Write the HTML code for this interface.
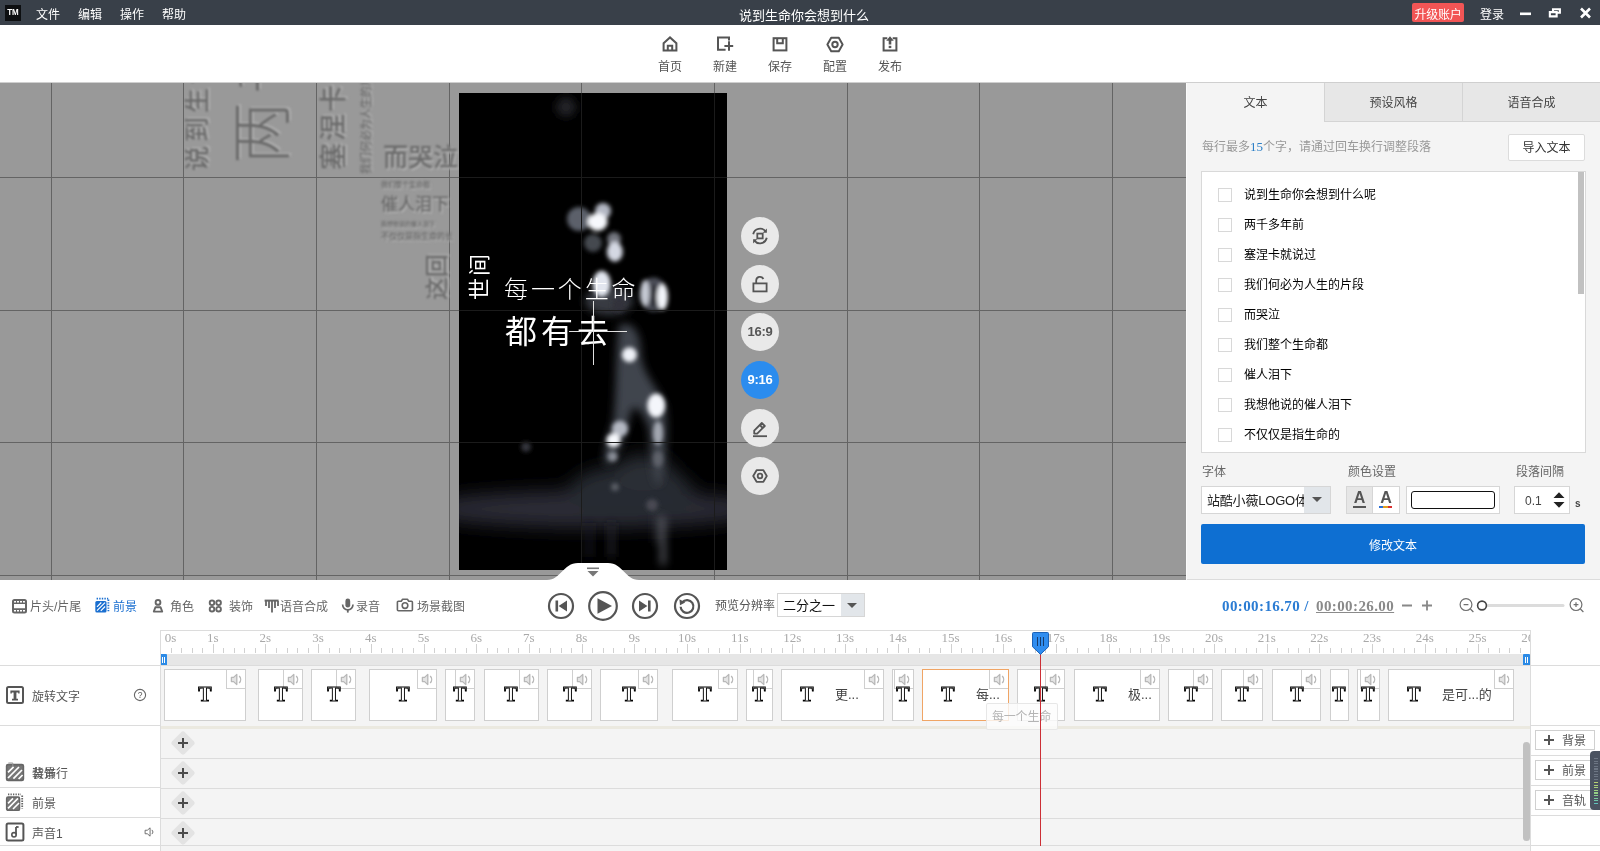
<!DOCTYPE html>
<html lang="zh-CN">
<head>
<meta charset="utf-8">
<title>说到生命你会想到什么</title>
<style>
*{box-sizing:border-box;margin:0;padding:0}
html,body{width:1600px;height:851px;overflow:hidden;background:#fff}
body{will-change:transform;font-family:"Liberation Sans","Noto Sans CJK SC",sans-serif;font-size:12px;color:#333;position:relative}
.abs{position:absolute}
/* ---------- title bar ---------- */
#titlebar{position:absolute;left:0;top:0;width:1600px;height:25px;background:#394049;color:#fff}
#titlebar .logo{position:absolute;left:5px;top:5px;width:16px;height:16px;background:#0d0f11;color:#fff;font-size:8px;font-weight:bold;line-height:16px;text-align:center}
#titlebar .logo b{display:block;transform:scaleY(1.2);transform-origin:50% 55%}
#titlebar .menu{position:absolute;top:0;height:25px;line-height:31px;font-size:12px;color:#fff;white-space:nowrap}
#titlebar .title{position:absolute;left:704px;width:200px;top:0;text-align:center;line-height:31px;font-size:13px;white-space:nowrap}
#titlebar .upg{position:absolute;left:1412px;top:3px;width:52px;height:19px;background:#f25555;border-radius:2px;color:#fff;font-size:12px;line-height:24px;text-align:center;white-space:nowrap;letter-spacing:-.3px}
#titlebar .login{position:absolute;left:1480px;top:0;line-height:31px;font-size:12px}
/* ---------- toolbar ---------- */
#toolbar{position:absolute;left:0;top:25px;width:1600px;height:58px;background:#fff;border-bottom:1px solid #cfcfcf}
.tbtn{position:absolute;top:0;width:56px;height:57px;color:#555;font-size:12px}
.tbtn svg{position:absolute;left:19px;top:9.5px;width:18px;height:18px;overflow:visible}
.tbtn span{position:absolute;left:0;width:56px;top:34px;line-height:17px;text-align:center;white-space:nowrap}
/* ---------- canvas ---------- */
#canvas{position:absolute;left:0;top:83px;width:1186px;height:497px;background:#999;overflow:hidden}
#canvas .vl{position:absolute;top:0;width:1px;height:497px;background:#646464}
#canvas .hl{position:absolute;left:0;height:1px;width:1187px;background:#646464}
#video{position:absolute;left:459px;top:10px;width:268px;height:477px;background:#000;overflow:hidden}
#video .vl,#video .hl{background:#1b1b1b}
.ghost{position:absolute;white-space:nowrap;color:#6a6a6a;line-height:1;font-weight:500;text-shadow:1.5px 1.5px 1px #b0b0b0;filter:blur(.8px)}
.vtxt{position:absolute;white-space:nowrap;color:#fff;line-height:1;font-family:"Liberation Sans","Noto Sans CJK SC",sans-serif;font-weight:200}
.cbtn{position:absolute;left:741px;width:38px;height:38px;border-radius:19px;background:#e9e9e9;color:#555;font-weight:bold;font-size:13px;line-height:38px;text-align:center;letter-spacing:-.3px}
.cbtn svg{position:absolute;left:9px;top:9px;width:20px;height:20px;overflow:visible}
.cbtn.on{background:#2b8cee;color:#fff}
#notch{position:absolute;left:533px;top:476px;width:120px;height:21px}
</style>
</head>
<body>
<div id="titlebar">
  <div class="logo"><b>TM</b></div>
  <div class="menu" style="left:36px">文件</div>
  <div class="menu" style="left:78px">编辑</div>
  <div class="menu" style="left:120px">操作</div>
  <div class="menu" style="left:162px">帮助</div>
  <div class="title">说到生命你会想到什么</div>
  <div class="upg">升级账户</div>
  <div class="login">登录</div>
  <svg class="abs" style="left:1515px;top:4px" width="80" height="18" viewBox="0 0 80 18">
    <rect x="5" y="8.5" width="11" height="2.6" fill="#fff"/>
    <path d="M38 8V5.2h6.9v3.5h-2.6 M34.85 8.1h6.8v4.3h-6.8z" fill="none" stroke="#fff" stroke-width="2.1"/>
    <path d="M66 4.5l9 9M75 4.5l-9 9" stroke="#fff" stroke-width="2.6" fill="none"/>
  </svg>
</div>
<div id="toolbar">
  <div class="tbtn" style="left:642px">
    <svg viewBox="0 0 18 18"><path d="M2.6 8.2L9 2.4l6.4 5.8v7.4H2.6z" fill="none" stroke="#555" stroke-width="2" stroke-linejoin="miter"/><path d="M6.8 15.4v-4.6h4.4v4.6" fill="none" stroke="#555" stroke-width="2"/></svg>
    <span>首页</span></div>
  <div class="tbtn" style="left:697px">
    <svg viewBox="0 0 18 18"><path d="M13 5.4V2.4H2v12.3h7.6" fill="none" stroke="#555" stroke-width="2"/><path d="M13 6.2v9.6M8.4 10.9h8.8" stroke="#555" stroke-width="2" fill="none"/></svg>
    <span>新建</span></div>
  <div class="tbtn" style="left:752px">
    <svg viewBox="0 0 18 18"><rect x="2.6" y="3.2" width="12.8" height="12.2" fill="none" stroke="#555" stroke-width="2"/><path d="M6.2 3.2v5h5.6v-5" fill="none" stroke="#555" stroke-width="2"/></svg>
    <span>保存</span></div>
  <div class="tbtn" style="left:807px">
    <svg viewBox="0 0 18 18"><path d="M5.2 2.8h7.6l3.8 6.7-3.8 6.7H5.2L1.4 9.5z" fill="none" stroke="#555" stroke-width="2" stroke-linejoin="round"/><circle cx="9" cy="9.5" r="2.7" fill="none" stroke="#555" stroke-width="2"/></svg>
    <span>配置</span></div>
  <div class="tbtn" style="left:862px">
    <svg viewBox="0 0 18 18"><path d="M6.3 3.2H2.6v12.2h12.8V3.2h-3.7" fill="none" stroke="#555" stroke-width="2"/><path d="M9 1.2l3.8 4.6h-2.5v3.8H7.7V5.8H5.2z" fill="#555"/><rect x="7.7" y="10.8" width="2.6" height="2.3" fill="#555"/></svg>
    <span>发布</span></div>
</div>
<div id="canvas">
  <!-- grid -->
  <div class="vl" style="left:51px"></div><div class="vl" style="left:183px"></div><div class="vl" style="left:316px"></div><div class="vl" style="left:449px"></div><div class="vl" style="left:581px"></div><div class="vl" style="left:714px"></div><div class="vl" style="left:847px"></div><div class="vl" style="left:979px"></div><div class="vl" style="left:1112px"></div>
  <div class="hl" style="top:94px"></div><div class="hl" style="top:227px"></div><div class="hl" style="top:359px"></div><div class="hl" style="top:492px"></div>
  <!-- ghost texts -->
  <div class="ghost" style="left:185px;top:88px;font-size:25px;letter-spacing:4px;transform-origin:0 0;transform:rotate(-90deg)">说到生命你会</div>
  <div class="ghost" style="left:232px;top:81px;font-size:62px;letter-spacing:8px;font-weight:300;transform-origin:0 0;transform:rotate(-90deg)">两千</div>
  <div class="ghost" style="left:321px;top:87px;font-size:27px;letter-spacing:2px;transform-origin:0 0;transform:rotate(-90deg)">塞涅卡就</div>
  <div class="ghost" style="left:361px;top:91px;font-size:11px;transform-origin:0 0;transform:rotate(-90deg)">我们何必为人生的片段</div>
  <div class="ghost" style="left:383px;top:62px;font-size:25px">而哭泣</div>
  <div class="ghost" style="left:381px;top:98px;font-size:7px">我们整个生命都</div>
  <div class="ghost" style="left:381px;top:113px;font-size:17px">催人泪下</div>
  <div class="ghost" style="left:381px;top:138px;font-size:6px">我想他说的催人泪下</div>
  <div class="ghost" style="left:381px;top:150px;font-size:8px">不仅仅是指生命的长</div>
  <div class="ghost" style="left:426px;top:217px;font-size:23px;transform-origin:0 0;transform:rotate(-90deg)">这回</div>
  <!-- video -->
  <div id="video">
    <svg class="abs" style="left:0;top:0" width="268" height="477" viewBox="0 0 268 477">
      <defs>
        <filter id="b2" x="-50%" y="-50%" width="200%" height="200%"><feGaussianBlur stdDeviation="2"/></filter>
        <filter id="b4" x="-50%" y="-50%" width="200%" height="200%"><feGaussianBlur stdDeviation="4"/></filter>
        <filter id="b8" x="-50%" y="-50%" width="200%" height="200%"><feGaussianBlur stdDeviation="9"/></filter>
      </defs>
      <rect width="268" height="477" fill="#000"/>
      <!-- bottom splash band -->
      <g filter="url(#b8)">
        <ellipse cx="134" cy="416" rx="175" ry="19" fill="#2a2c34"/>
        <ellipse cx="172" cy="398" rx="62" ry="26" fill="#272930"/>
        <ellipse cx="185" cy="380" rx="30" ry="18" fill="#2c2e36"/>
      </g>
      <g filter="url(#b4)">
        <rect x="202" y="424" width="4" height="48" fill="#6f727b"/>
        <rect x="196" y="420" width="3" height="30" fill="#3c3e46"/>
        <rect x="128" y="430" width="4" height="34" fill="#22242a"/>
        <rect x="150" y="430" width="5" height="34" fill="#25272d"/>
        <!-- falling column : inverted Y -->
        <path d="M160 232 C172 228 182 236 182 262 C184 282 200 296 206 312 C210 340 206 380 200 392 C194 392 192 360 190 336 C184 318 176 310 172 318 C168 340 160 360 150 372 C142 372 146 350 154 330 C158 300 156 262 160 232z" fill="#41444d"/>
        <ellipse cx="150" cy="208" rx="24" ry="14" fill="#383a42"/>
      </g>
      <!-- faint -->
      <circle cx="107" cy="14" r="10" fill="#202226" filter="url(#b4)"/>
      <circle cx="67" cy="354" r="5" fill="#34363c" filter="url(#b2)"/>
      <circle cx="156" cy="394" r="4" fill="#5a5d65" filter="url(#b2)"/>
      <circle cx="193" cy="412" r="6" fill="#484a52" filter="url(#b2)"/>
      <!-- droplets -->
      <g filter="url(#b2)">
        <circle cx="120" cy="126" r="12" fill="#5c606b"/>
        <circle cx="134" cy="150" r="9" fill="#45484f"/>
        <circle cx="155" cy="146" r="7" fill="#73767f"/>
        <circle cx="144" cy="118" r="8" fill="#b3b7c3"/>
        <ellipse cx="138.6" cy="129" rx="10" ry="9" fill="#f6f8fc"/>
        <ellipse cx="155.8" cy="158.7" rx="8" ry="10" fill="#d4d8e3"/>
        <ellipse cx="142.7" cy="190.7" rx="9" ry="13" fill="#e2e6ef"/>
        <circle cx="160" cy="212" r="7" fill="#30323a"/>
        <!-- big droplet with two lobes -->
        <ellipse cx="194.5" cy="201.4" rx="14" ry="17" fill="#4b4e58"/>
        <ellipse cx="186" cy="200" rx="4.5" ry="13" fill="#c6cad4"/>
        <ellipse cx="203.5" cy="204" rx="5.5" ry="13" fill="#f3f5fa"/>
        <ellipse cx="195" cy="203" rx="2.5" ry="12" fill="#15161a"/>
        <circle cx="170.4" cy="261.7" r="7.5" fill="#eef1f7"/>
        <ellipse cx="197.2" cy="312.6" rx="9" ry="12" fill="#f4f6fb"/>
        <ellipse cx="199" cy="340" rx="5" ry="12" fill="#a3a7b1"/>
        <circle cx="161" cy="335.7" r="8" fill="#b4b8c2"/>
        <circle cx="154.5" cy="347.2" r="7" fill="#f6f8fc"/>
        <circle cx="153.6" cy="363.6" r="5" fill="#898d96"/>
        <ellipse cx="199" cy="366" rx="5" ry="8" fill="#5f626b"/>
      </g>
    </svg>
    <div class="vl" style="left:122px"></div><div class="vl" style="left:255px"></div>
    <div class="hl" style="top:84px"></div><div class="hl" style="top:217px"></div><div class="hl" style="top:349px"></div>
    <!-- rotated text -->
    <div class="vtxt" style="left:10px;top:207px;font-size:22px;letter-spacing:2px;font-weight:400;transform-origin:0 0;transform:rotate(-90deg)">世间</div>
    <div class="vtxt" style="left:45px;top:185px;font-size:24px;letter-spacing:2.9px">每一个生命</div>
    <div class="vtxt" style="left:46px;top:223px;font-size:32px;letter-spacing:4px;font-weight:400">都有去</div>
    <div class="abs" style="left:110px;top:238px;width:58px;height:1px;background:#e0e0e0"></div>
    <div class="abs" style="left:134px;top:208px;width:1px;height:64px;background:#e0e0e0"></div>
  </div>
  <!-- round buttons -->
  <div class="cbtn" style="top:134px"><svg viewBox="0 0 20 20"><path d="M3.2 8.2A7 7 0 0 1 15.6 5.4" fill="none" stroke="#555" stroke-width="1.8"/><path d="M16.8 11.8A7 7 0 0 1 4.4 14.6" fill="none" stroke="#555" stroke-width="1.8"/><path d="M16.9 2.6v4.2h-4.2z" fill="#555"/><path d="M3.1 17.4v-4.2h4.2z" fill="#555"/><rect x="7.3" y="7.6" width="5.4" height="4.8" fill="none" stroke="#555" stroke-width="1.8"/></svg></div>
  <div class="cbtn" style="top:182px"><svg viewBox="0 0 20 20"><rect x="3.4" y="9.4" width="13.2" height="8" fill="none" stroke="#555" stroke-width="1.8"/><path d="M6.2 9.2V6.6a3.8 3.8 0 0 1 7.2-1.6" fill="none" stroke="#555" stroke-width="1.8"/></svg></div>
  <div class="cbtn" style="top:230px">16:9</div>
  <div class="cbtn on" style="top:278px">9:16</div>
  <div class="cbtn" style="top:326px"><svg viewBox="0 0 20 20"><path d="M4.2 12.6l7.6-7.6 3 3-7.6 7.6H4.2z" fill="none" stroke="#555" stroke-width="1.8" stroke-linejoin="round"/><path d="M9.8 7l3 3" stroke="#555" stroke-width="1.8"/><path d="M3 18.2h14" stroke="#555" stroke-width="1.8"/></svg></div>
  <div class="cbtn" style="top:374px"><svg viewBox="0 0 20 20"><path d="M6.6 4.2h6.8l3.4 5.8-3.4 5.8H6.6L3.2 10z" fill="none" stroke="#555" stroke-width="1.8" stroke-linejoin="round"/><circle cx="10" cy="10" r="2.3" fill="none" stroke="#555" stroke-width="1.8"/></svg></div>
  <!-- notch -->
  <svg id="notch" viewBox="0 0 120 21"><path d="M14 21 C28 21 30 4 45 4 L75 4 C90 4 92 21 106 21z" fill="#fff"/><rect x="54" y="8.5" width="12" height="1.6" fill="#777"/><path d="M54.5 12h11l-5.5 5.5z" fill="#777"/></svg>
</div>
<style>
/* ---------- right panel ---------- */
#panel{position:absolute;left:1187px;top:83px;width:413px;height:497px;background:#f4f4f4;border-bottom:1px solid #dcdcdc;box-shadow:-1px 0 0 #fbfbfb}
#panel .tab{position:absolute;top:0;height:39px;line-height:40px;text-align:center;font-size:12px;color:#444;background:#e7e7e7;border-bottom:1px solid #d4d4d4;border-left:1px solid #d4d4d4}
#panel .tab.on{background:#f4f4f4;border-bottom:none;border-left:none}
#panel .hint{position:absolute;left:15px;top:55px;line-height:18px;font-size:12px;color:#999;white-space:nowrap}
#panel .hint b{font-weight:normal;color:#2b7fc7;font-family:"Liberation Serif",serif;font-size:13px}
#panel .imp{position:absolute;left:321px;top:51px;width:77px;height:27px;background:#fff;border:1px solid #dcdcdc;border-radius:2px;text-align:center;line-height:26px;font-size:12px;color:#333}
#list{position:absolute;left:14px;top:88px;width:385px;height:282px;background:#fff;border:1px solid #d9d9d9;overflow:hidden}
#list .it{position:absolute;left:0;width:370px;height:30px}
#list .it i{position:absolute;left:16px;top:8px;width:14px;height:14px;border:1px solid #d8d8d8;background:#fff}
#list .it span{position:absolute;left:42px;top:0;line-height:31px;font-size:12px;color:#000;white-space:nowrap}
#list .sb{position:absolute;left:376px;top:0;width:6px;height:122px;background:#c1c1c1}
#panel .lbl{position:absolute;top:380px;line-height:18px;font-size:12px;color:#666;white-space:nowrap}
#panel .combo{position:absolute;left:14px;top:403px;width:130px;height:28px;background:#fff;border:1px solid #d6d6d6;overflow:hidden}
#panel .combo span{position:absolute;left:5px;top:0;line-height:28px;font-size:13px;color:#222;white-space:nowrap;letter-spacing:-.2px}
#panel .combo em{position:absolute;right:0;top:0;width:26px;height:26px;background:#e2e6ea}
#panel .combo em:after{content:"";position:absolute;left:8px;top:10px;border:5px solid transparent;border-top:5px solid #555;border-bottom:none}
#panel .abtn{position:absolute;top:403px;width:27px;height:28px;border:1px solid #d6d6d6;background:#fff;text-align:center;font-weight:bold;font-size:16px;line-height:22px;color:#555}
#panel .abtn u{position:absolute;left:6px;top:19px;width:13px;height:2px;background:#555}
#panel .colorbox{position:absolute;left:219px;top:403px;width:94px;height:28px;background:#fff;border:1px solid #d6d6d6}
#panel .colorbox i{position:absolute;left:4px;top:4px;width:84px;height:18px;border:1.5px solid #111;border-radius:3px;background:#fff}
#panel .spin{position:absolute;left:327px;top:403px;width:56px;height:28px;background:#fff;border:1px solid #d6d6d6}
#panel .spin span{position:absolute;left:10px;top:0;line-height:28px;font-size:12px;color:#444}
#panel .go{position:absolute;left:14px;top:441px;width:384px;height:40px;background:#0e6fd2;border-radius:2px;color:#fff;text-align:center;line-height:45px;font-size:12px}
</style>
<div id="panel">
  <div class="tab on" style="left:0;width:137px">文本</div>
  <div class="tab" style="left:137px;width:138px">预设风格</div>
  <div class="tab" style="left:275px;width:138px">语音合成</div>
  <div class="hint">每行最多<b>15</b>个字，请通过回车换行调整段落</div>
  <div class="imp">导入文本</div>
  <div id="list">
    <div class="it" style="top:8px"><i></i><span>说到生命你会想到什么呢</span></div>
    <div class="it" style="top:38px"><i></i><span>两千多年前</span></div>
    <div class="it" style="top:68px"><i></i><span>塞涅卡就说过</span></div>
    <div class="it" style="top:98px"><i></i><span>我们何必为人生的片段</span></div>
    <div class="it" style="top:128px"><i></i><span>而哭泣</span></div>
    <div class="it" style="top:158px"><i></i><span>我们整个生命都</span></div>
    <div class="it" style="top:188px"><i></i><span>催人泪下</span></div>
    <div class="it" style="top:218px"><i></i><span>我想他说的催人泪下</span></div>
    <div class="it" style="top:248px"><i></i><span>不仅仅是指生命的</span></div>
    <div class="sb"></div>
  </div>
  <div class="lbl" style="left:15px">字体</div>
  <div class="lbl" style="left:161px">颜色设置</div>
  <div class="lbl" style="left:329px">段落间隔</div>
  <div class="combo"><span>站酷小薇LOGO体</span><em></em></div>
  <div class="abtn" style="left:159px;background:#e6e6e6">A<u></u></div>
  <div class="abtn" style="left:186px;border-left:none;width:27px">A<u style="background:linear-gradient(90deg,#2b6fd6 0 33%,#e0a020 33% 66%,#d93030 66%)"></u></div>
  <div class="colorbox"><i></i></div>
  <div class="spin"><span>0.1</span>
    <svg class="abs" style="left:37px;top:3px" width="14" height="20" viewBox="0 0 14 20"><path d="M1.5 8L7 2.2 12.5 8z M1.5 12L7 17.8 12.5 12z" fill="#222"/></svg>
  </div>
  <div class="abs" style="left:388px;top:415px;font-size:10px;font-weight:bold;color:#444">s</div>
  <div class="go">修改文本</div>
</div>
<style>
/* ---------- bottom ---------- */
#bottom{position:absolute;left:0;top:580px;width:1600px;height:271px;background:#fff}
.btab{position:absolute;top:18px;height:18px;line-height:18px;font-size:12px;color:#666;white-space:nowrap}
.btab.on{color:#1a6fd0}
.bic{position:absolute;top:16px;width:18px;height:18px;overflow:visible}
#ruler{position:absolute;left:160px;top:50px;width:1371px;height:36px;border-top:1px solid #dcdcdc;border-left:1px solid #dcdcdc;border-right:1px solid #dcdcdc;overflow:hidden}
#ruler .lb{position:absolute;top:0px;width:40px;margin-left:-20px;text-align:center;font-family:"Liberation Serif",serif;font-size:13px;line-height:14px;color:#a9a9a9;white-space:nowrap}
#ruler .tk{position:absolute;top:17px;width:1px;height:5px;background:#d0d0d0}
#ruler .tk.M{top:13px;height:9px}
#ruler .bar{position:absolute;left:0;top:23px;width:1371px;height:12px;background:#e6e6e6}
.hd{position:absolute;top:23px;width:7px;height:12px;background:#2b8ae6;border-radius:1px}
.hd:before,.hd:after{content:"";position:absolute;top:3px;width:1px;height:6px;background:#fff}
.hd:before{left:2px}.hd:after{left:4px}
#tracks{position:absolute;left:0;top:85px;width:1600px;height:186px}
.rowl{position:absolute;left:0;width:160px;border-top:1px solid #dcdcdc}
.rlabel{position:absolute;left:32px;line-height:18px;font-size:12px;color:#555;white-space:nowrap}
.ric{position:absolute;left:5px;width:20px;height:20px;overflow:visible}
#tarea{position:absolute;left:160px;top:0;width:1371px;height:186px;background:#f4f4f4;border-left:1px solid #dcdcdc;border-right:1px solid #dcdcdc;border-top:1px solid #dcdcdc;overflow:hidden}
.clip{position:absolute;top:3px;height:52px;background:#fff;border:1px solid #cfcfcf;overflow:hidden}
.clip.sel{border-color:#f0a565}
.clip .sp{position:absolute;right:-1px;top:-1px;width:20px;height:20px;border:1px solid #cfcfcf;background:#fff}
.clip .sp svg{position:absolute;left:3px;top:3px;width:13px;height:13px}
.clip .T{position:absolute;top:16px;width:20px;height:20px;overflow:visible}
.clip .tx{position:absolute;top:16px;line-height:18px;font-size:13px;color:#444;white-space:nowrap}
.trl{position:absolute;left:0;width:1371px;height:1px;background:#dcdcdc}
.plus{position:absolute;left:13px;width:18px;height:18px;background:#e3e3e3;border-radius:3px;transform:rotate(45deg)}
.plusx{position:absolute;left:17px;width:10px;height:10px}
.plusx:before{content:"";position:absolute;left:0;top:4px;width:10px;height:2px;background:#4a4a4a}
.plusx:after{content:"";position:absolute;left:4px;top:0;width:2px;height:10px;background:#4a4a4a}
.addb{position:absolute;left:1535px;width:60px;height:20px;border:1px solid #d0d0d0;background:#fff;font-size:12px;color:#555;line-height:21px;white-space:nowrap}
.addb span{position:absolute;left:26px;top:0}
.addb:before{content:"";position:absolute;left:8px;top:8px;width:10px;height:2px;background:#555}
.addb:after{content:"";position:absolute;left:12px;top:4px;width:2px;height:10px;background:#555}
.rline{position:absolute;left:1531px;width:69px;height:1px;background:#dcdcdc}
</style>
<div id="bottom">

  <svg class="bic" style="left:11px" viewBox="0 0 18 18"><rect x="2" y="4" width="13" height="12.4" rx="1.5" fill="none" stroke="#666" stroke-width="2"/><path d="M2 7.3h13M2 13.1h13" stroke="#666" stroke-width="1.6"/><path d="M5.5 4v3M8.5 4v3M11.5 4v3M5.5 13.4v3M8.5 13.4v3M11.5 13.4v3" stroke="#666" stroke-width="1"/></svg>
  <div class="btab" style="left:30px">片头/片尾</div>
  <svg class="bic" style="left:94px" viewBox="0 0 18 18"><rect x="1.3" y="5" width="11.2" height="11.4" rx="1.5" fill="#1a6fd0"/><path d="M3 14.6l8-8M3 10.8l4.3-4.3M6.8 14.8l4.3-4.3" stroke="#fff" stroke-width="1.2"/><path d="M2.6 2.6h11.6" stroke="#1a6fd0" stroke-width="1.8" stroke-dasharray="1.4 1.2"/><path d="M14.4 3.6v11.6" stroke="#1a6fd0" stroke-width="1.8" stroke-dasharray="1.4 1.2"/></svg>
  <div class="btab on" style="left:113px">前景</div>
  <svg class="bic" style="left:149px" viewBox="0 0 18 18"><circle cx="9" cy="6.4" r="2.4" fill="none" stroke="#666" stroke-width="1.9"/><path d="M6.4 11.2h5.2l1.6 4.4H4.8z" fill="none" stroke="#666" stroke-width="1.9" stroke-linejoin="round"/></svg>
  <div class="btab" style="left:170px">角色</div>
  <svg class="bic" style="left:207px" viewBox="0 0 18 18"><g fill="none" stroke="#666" stroke-width="1.9"><circle cx="5" cy="6.8" r="2.3"/><circle cx="11.6" cy="6.8" r="2.3"/><circle cx="5" cy="13.2" r="2.3"/><circle cx="11.6" cy="13.2" r="2.3"/></g></svg>
  <div class="btab" style="left:229px">装饰</div>
  <svg class="bic" style="left:263px" viewBox="0 0 18 18"><path d="M1.6 4.6h14" stroke="#666" stroke-width="2"/><path d="M3 5v5M6 5v7M9 5v11.6M12 5v7M15 5v5" stroke="#666" stroke-width="1.8"/></svg>
  <div class="btab" style="left:280px">语音合成</div>
  <svg class="bic" style="left:339px" viewBox="0 0 18 18"><rect x="6.4" y="2.6" width="4.8" height="9" rx="2.4" fill="#666"/><path d="M3.6 8.6a5.2 5.2 0 0 0 10.4 0" fill="none" stroke="#666" stroke-width="1.7"/><path d="M8.8 13.6v3" stroke="#666" stroke-width="1.8"/></svg>
  <div class="btab" style="left:356px">录音</div>
  <svg class="bic" style="left:396px" viewBox="0 0 18 18"><path d="M2.4 5.2h2.8l1.4-2h4.8l1.4 2h2.6a1 1 0 0 1 1 1v7.6a1 1 0 0 1-1 1H2.4a1 1 0 0 1-1-1V6.2a1 1 0 0 1 1-1z" fill="none" stroke="#666" stroke-width="1.6" stroke-linejoin="round"/><circle cx="9" cy="9.6" r="2.8" fill="none" stroke="#666" stroke-width="1.6"/></svg>
  <div class="btab" style="left:417px">场景截图</div>

  <svg class="abs" style="left:540px;top:8px" width="170" height="36" viewBox="0 0 170 36">
    <g fill="none" stroke="#555" stroke-width="2.2"><circle cx="21" cy="18" r="12"/><circle cx="63" cy="18" r="13.8"/><circle cx="105" cy="18" r="12"/><circle cx="147" cy="18" r="12"/></g>
    <path d="M15.5 12.6h2.6v10.8h-2.6z M27 12.6v10.8l-8.4-5.4z" fill="#555"/>
    <path d="M57.5 10.2v15.6L72 18z" fill="#555"/>
    <path d="M108 12.6h2.6v10.8H108z M99 12.6v10.8l8.4-5.4z" fill="#555"/>
    <path d="M142.2 14.2a6.4 6.4 0 1 1-1.6 4.6" fill="none" stroke="#555" stroke-width="2.2"/>
    <path d="M139.4 11.2l.6 6 5.2-2.6z" fill="#555"/>
  </svg>
  <div class="abs" style="left:715px;top:17px;line-height:18px;font-size:12px;color:#555;white-space:nowrap">预览分辨率</div>
  <div class="abs" style="left:777px;top:13px;width:88px;height:24px;border:1px solid #d6d6d6;background:#fff"><span class="abs" style="left:5px;top:0;line-height:23px;font-size:13px;color:#111;white-space:nowrap">二分之一</span><span class="abs" style="right:0;top:0;width:23px;height:22px;background:#e2e6ea"></span><span class="abs" style="left:69px;top:9px;border:5px solid transparent;border-top:5px solid #555;border-bottom:none"></span></div>
  <div class="abs" style="left:1222px;top:16px;line-height:20px;font-family:'Liberation Serif',serif;font-weight:bold;font-size:15px;color:#2b7cd3;white-space:nowrap;letter-spacing:.4px">00:00:16.70 /</div>
  <div class="abs" style="left:1316px;top:16px;line-height:20px;font-family:'Liberation Serif',serif;font-weight:bold;font-size:15px;color:#8a8a8a;white-space:nowrap;text-decoration:underline;letter-spacing:.4px">00:00:26.00</div>
  <svg class="abs" style="left:1400px;top:16px" width="190" height="20" viewBox="0 0 190 20">
    <path d="M2 9.5h10M22 9.5h10M27 4.5v10" stroke="#888" stroke-width="1.8"/>
    <g fill="none" stroke="#6f6f6f" stroke-width="1.2"><circle cx="66" cy="8.6" r="5.9"/><path d="M63.6 8.6h4.8M70.4 13l3 3"/><circle cx="176" cy="8.6" r="5.9"/><path d="M173.6 8.6h4.8M176 6.2v4.8M180.4 13l3 3"/></g>
    <path d="M87 9.5h76" stroke="#dcdcdc" stroke-width="3" stroke-linecap="round"/>
    <circle cx="82" cy="9.5" r="4.4" fill="#fff" stroke="#444" stroke-width="1.6"/>
  </svg>

  <div id="ruler">
<div class="lb" style="left:9.5px">0s</div>
<div class="lb" style="left:51.7px">1s</div>
<div class="lb" style="left:104.4px">2s</div>
<div class="lb" style="left:157.1px">3s</div>
<div class="lb" style="left:209.8px">4s</div>
<div class="lb" style="left:262.5px">5s</div>
<div class="lb" style="left:315.2px">6s</div>
<div class="lb" style="left:367.9px">7s</div>
<div class="lb" style="left:420.6px">8s</div>
<div class="lb" style="left:473.3px">9s</div>
<div class="lb" style="left:526.0px">10s</div>
<div class="lb" style="left:578.7px">11s</div>
<div class="lb" style="left:631.4px">12s</div>
<div class="lb" style="left:684.1px">13s</div>
<div class="lb" style="left:736.8px">14s</div>
<div class="lb" style="left:789.5px">15s</div>
<div class="lb" style="left:842.2px">16s</div>
<div class="lb" style="left:894.9px">17s</div>
<div class="lb" style="left:947.6px">18s</div>
<div class="lb" style="left:1000.3px">19s</div>
<div class="lb" style="left:1053.0px">20s</div>
<div class="lb" style="left:1105.7px">21s</div>
<div class="lb" style="left:1158.4px">22s</div>
<div class="lb" style="left:1211.1px">23s</div>
<div class="lb" style="left:1263.8px">24s</div>
<div class="lb" style="left:1316.5px">25s</div>
<div class="lb" style="left:1369.2px">26s</div>
<i class="tk M" style="left:-1.0px"></i>
<i class="tk" style="left:9.5px"></i>
<i class="tk" style="left:20.1px"></i>
<i class="tk" style="left:30.6px"></i>
<i class="tk" style="left:41.2px"></i>
<i class="tk M" style="left:51.7px"></i>
<i class="tk" style="left:62.2px"></i>
<i class="tk" style="left:72.8px"></i>
<i class="tk" style="left:83.3px"></i>
<i class="tk" style="left:93.9px"></i>
<i class="tk M" style="left:104.4px"></i>
<i class="tk" style="left:114.9px"></i>
<i class="tk" style="left:125.5px"></i>
<i class="tk" style="left:136.0px"></i>
<i class="tk" style="left:146.6px"></i>
<i class="tk M" style="left:157.1px"></i>
<i class="tk" style="left:167.6px"></i>
<i class="tk" style="left:178.2px"></i>
<i class="tk" style="left:188.7px"></i>
<i class="tk" style="left:199.3px"></i>
<i class="tk M" style="left:209.8px"></i>
<i class="tk" style="left:220.3px"></i>
<i class="tk" style="left:230.9px"></i>
<i class="tk" style="left:241.4px"></i>
<i class="tk" style="left:252.0px"></i>
<i class="tk M" style="left:262.5px"></i>
<i class="tk" style="left:273.0px"></i>
<i class="tk" style="left:283.6px"></i>
<i class="tk" style="left:294.1px"></i>
<i class="tk" style="left:304.7px"></i>
<i class="tk M" style="left:315.2px"></i>
<i class="tk" style="left:325.7px"></i>
<i class="tk" style="left:336.3px"></i>
<i class="tk" style="left:346.8px"></i>
<i class="tk" style="left:357.4px"></i>
<i class="tk M" style="left:367.9px"></i>
<i class="tk" style="left:378.4px"></i>
<i class="tk" style="left:389.0px"></i>
<i class="tk" style="left:399.5px"></i>
<i class="tk" style="left:410.1px"></i>
<i class="tk M" style="left:420.6px"></i>
<i class="tk" style="left:431.1px"></i>
<i class="tk" style="left:441.7px"></i>
<i class="tk" style="left:452.2px"></i>
<i class="tk" style="left:462.8px"></i>
<i class="tk M" style="left:473.3px"></i>
<i class="tk" style="left:483.8px"></i>
<i class="tk" style="left:494.4px"></i>
<i class="tk" style="left:504.9px"></i>
<i class="tk" style="left:515.5px"></i>
<i class="tk M" style="left:526.0px"></i>
<i class="tk" style="left:536.5px"></i>
<i class="tk" style="left:547.1px"></i>
<i class="tk" style="left:557.6px"></i>
<i class="tk" style="left:568.2px"></i>
<i class="tk M" style="left:578.7px"></i>
<i class="tk" style="left:589.2px"></i>
<i class="tk" style="left:599.8px"></i>
<i class="tk" style="left:610.3px"></i>
<i class="tk" style="left:620.9px"></i>
<i class="tk M" style="left:631.4px"></i>
<i class="tk" style="left:641.9px"></i>
<i class="tk" style="left:652.5px"></i>
<i class="tk" style="left:663.0px"></i>
<i class="tk" style="left:673.6px"></i>
<i class="tk M" style="left:684.1px"></i>
<i class="tk" style="left:694.6px"></i>
<i class="tk" style="left:705.2px"></i>
<i class="tk" style="left:715.7px"></i>
<i class="tk" style="left:726.3px"></i>
<i class="tk M" style="left:736.8px"></i>
<i class="tk" style="left:747.3px"></i>
<i class="tk" style="left:757.9px"></i>
<i class="tk" style="left:768.4px"></i>
<i class="tk" style="left:779.0px"></i>
<i class="tk M" style="left:789.5px"></i>
<i class="tk" style="left:800.0px"></i>
<i class="tk" style="left:810.6px"></i>
<i class="tk" style="left:821.1px"></i>
<i class="tk" style="left:831.7px"></i>
<i class="tk M" style="left:842.2px"></i>
<i class="tk" style="left:852.7px"></i>
<i class="tk" style="left:863.3px"></i>
<i class="tk" style="left:873.8px"></i>
<i class="tk" style="left:884.4px"></i>
<i class="tk M" style="left:894.9px"></i>
<i class="tk" style="left:905.4px"></i>
<i class="tk" style="left:916.0px"></i>
<i class="tk" style="left:926.5px"></i>
<i class="tk" style="left:937.1px"></i>
<i class="tk M" style="left:947.6px"></i>
<i class="tk" style="left:958.1px"></i>
<i class="tk" style="left:968.7px"></i>
<i class="tk" style="left:979.2px"></i>
<i class="tk" style="left:989.8px"></i>
<i class="tk M" style="left:1000.3px"></i>
<i class="tk" style="left:1010.8px"></i>
<i class="tk" style="left:1021.4px"></i>
<i class="tk" style="left:1031.9px"></i>
<i class="tk" style="left:1042.5px"></i>
<i class="tk M" style="left:1053.0px"></i>
<i class="tk" style="left:1063.5px"></i>
<i class="tk" style="left:1074.1px"></i>
<i class="tk" style="left:1084.6px"></i>
<i class="tk" style="left:1095.2px"></i>
<i class="tk M" style="left:1105.7px"></i>
<i class="tk" style="left:1116.2px"></i>
<i class="tk" style="left:1126.8px"></i>
<i class="tk" style="left:1137.3px"></i>
<i class="tk" style="left:1147.9px"></i>
<i class="tk M" style="left:1158.4px"></i>
<i class="tk" style="left:1168.9px"></i>
<i class="tk" style="left:1179.5px"></i>
<i class="tk" style="left:1190.0px"></i>
<i class="tk" style="left:1200.6px"></i>
<i class="tk M" style="left:1211.1px"></i>
<i class="tk" style="left:1221.6px"></i>
<i class="tk" style="left:1232.2px"></i>
<i class="tk" style="left:1242.7px"></i>
<i class="tk" style="left:1253.3px"></i>
<i class="tk M" style="left:1263.8px"></i>
<i class="tk" style="left:1274.3px"></i>
<i class="tk" style="left:1284.9px"></i>
<i class="tk" style="left:1295.4px"></i>
<i class="tk" style="left:1306.0px"></i>
<i class="tk M" style="left:1316.5px"></i>
<i class="tk" style="left:1327.0px"></i>
<i class="tk" style="left:1337.6px"></i>
<i class="tk" style="left:1348.1px"></i>
<i class="tk" style="left:1358.7px"></i>
<i class="tk M" style="left:1369.2px"></i>
<div class="bar"></div><div class="hd" style="left:-1px"></div><div class="hd" style="left:1362px"></div>
  </div>
  <div id="tracks">
    <div id="tarea">
<div class="clip" style="left:3px;width:82px"><span class="sp"><svg viewBox="0 0 13 13"><path d="M1.4 4.4h2.2l3.2-3v10.2l-3.2-3H1.4z" fill="#e4e4e4" stroke="#b8b8b8" stroke-width="1.3" stroke-linejoin="round"/><path d="M9.2 3a5 5 0 0 1 0 7" fill="none" stroke="#b8b8b8" stroke-width="1.4"/></svg></span><svg class="T" style="left:30px" viewBox="0 0 20 20"><text x="10" y="14.6" text-anchor="middle" font-family="Liberation Serif,serif" font-weight="bold" font-size="20" fill="#fff" stroke="#000" stroke-width="0.95">T</text></svg></div>
<div class="clip" style="left:97px;width:45px"><span class="sp"><svg viewBox="0 0 13 13"><path d="M1.4 4.4h2.2l3.2-3v10.2l-3.2-3H1.4z" fill="#e4e4e4" stroke="#b8b8b8" stroke-width="1.3" stroke-linejoin="round"/><path d="M9.2 3a5 5 0 0 1 0 7" fill="none" stroke="#b8b8b8" stroke-width="1.4"/></svg></span><svg class="T" style="left:12px" viewBox="0 0 20 20"><text x="10" y="14.6" text-anchor="middle" font-family="Liberation Serif,serif" font-weight="bold" font-size="20" fill="#fff" stroke="#000" stroke-width="0.95">T</text></svg></div>
<div class="clip" style="left:150px;width:45px"><span class="sp"><svg viewBox="0 0 13 13"><path d="M1.4 4.4h2.2l3.2-3v10.2l-3.2-3H1.4z" fill="#e4e4e4" stroke="#b8b8b8" stroke-width="1.3" stroke-linejoin="round"/><path d="M9.2 3a5 5 0 0 1 0 7" fill="none" stroke="#b8b8b8" stroke-width="1.4"/></svg></span><svg class="T" style="left:12px" viewBox="0 0 20 20"><text x="10" y="14.6" text-anchor="middle" font-family="Liberation Serif,serif" font-weight="bold" font-size="20" fill="#fff" stroke="#000" stroke-width="0.95">T</text></svg></div>
<div class="clip" style="left:208px;width:68px"><span class="sp"><svg viewBox="0 0 13 13"><path d="M1.4 4.4h2.2l3.2-3v10.2l-3.2-3H1.4z" fill="#e4e4e4" stroke="#b8b8b8" stroke-width="1.3" stroke-linejoin="round"/><path d="M9.2 3a5 5 0 0 1 0 7" fill="none" stroke="#b8b8b8" stroke-width="1.4"/></svg></span><svg class="T" style="left:23px" viewBox="0 0 20 20"><text x="10" y="14.6" text-anchor="middle" font-family="Liberation Serif,serif" font-weight="bold" font-size="20" fill="#fff" stroke="#000" stroke-width="0.95">T</text></svg></div>
<div class="clip" style="left:284px;width:30px"><span class="sp"><svg viewBox="0 0 13 13"><path d="M1.4 4.4h2.2l3.2-3v10.2l-3.2-3H1.4z" fill="#e4e4e4" stroke="#b8b8b8" stroke-width="1.3" stroke-linejoin="round"/><path d="M9.2 3a5 5 0 0 1 0 7" fill="none" stroke="#b8b8b8" stroke-width="1.4"/></svg></span><svg class="T" style="left:4px" viewBox="0 0 20 20"><text x="10" y="14.6" text-anchor="middle" font-family="Liberation Serif,serif" font-weight="bold" font-size="20" fill="#fff" stroke="#000" stroke-width="0.95">T</text></svg></div>
<div class="clip" style="left:323px;width:55px"><span class="sp"><svg viewBox="0 0 13 13"><path d="M1.4 4.4h2.2l3.2-3v10.2l-3.2-3H1.4z" fill="#e4e4e4" stroke="#b8b8b8" stroke-width="1.3" stroke-linejoin="round"/><path d="M9.2 3a5 5 0 0 1 0 7" fill="none" stroke="#b8b8b8" stroke-width="1.4"/></svg></span><svg class="T" style="left:16px" viewBox="0 0 20 20"><text x="10" y="14.6" text-anchor="middle" font-family="Liberation Serif,serif" font-weight="bold" font-size="20" fill="#fff" stroke="#000" stroke-width="0.95">T</text></svg></div>
<div class="clip" style="left:386px;width:45px"><span class="sp"><svg viewBox="0 0 13 13"><path d="M1.4 4.4h2.2l3.2-3v10.2l-3.2-3H1.4z" fill="#e4e4e4" stroke="#b8b8b8" stroke-width="1.3" stroke-linejoin="round"/><path d="M9.2 3a5 5 0 0 1 0 7" fill="none" stroke="#b8b8b8" stroke-width="1.4"/></svg></span><svg class="T" style="left:12px" viewBox="0 0 20 20"><text x="10" y="14.6" text-anchor="middle" font-family="Liberation Serif,serif" font-weight="bold" font-size="20" fill="#fff" stroke="#000" stroke-width="0.95">T</text></svg></div>
<div class="clip" style="left:439px;width:58px"><span class="sp"><svg viewBox="0 0 13 13"><path d="M1.4 4.4h2.2l3.2-3v10.2l-3.2-3H1.4z" fill="#e4e4e4" stroke="#b8b8b8" stroke-width="1.3" stroke-linejoin="round"/><path d="M9.2 3a5 5 0 0 1 0 7" fill="none" stroke="#b8b8b8" stroke-width="1.4"/></svg></span><svg class="T" style="left:18px" viewBox="0 0 20 20"><text x="10" y="14.6" text-anchor="middle" font-family="Liberation Serif,serif" font-weight="bold" font-size="20" fill="#fff" stroke="#000" stroke-width="0.95">T</text></svg></div>
<div class="clip" style="left:511px;width:66px"><span class="sp"><svg viewBox="0 0 13 13"><path d="M1.4 4.4h2.2l3.2-3v10.2l-3.2-3H1.4z" fill="#e4e4e4" stroke="#b8b8b8" stroke-width="1.3" stroke-linejoin="round"/><path d="M9.2 3a5 5 0 0 1 0 7" fill="none" stroke="#b8b8b8" stroke-width="1.4"/></svg></span><svg class="T" style="left:22px" viewBox="0 0 20 20"><text x="10" y="14.6" text-anchor="middle" font-family="Liberation Serif,serif" font-weight="bold" font-size="20" fill="#fff" stroke="#000" stroke-width="0.95">T</text></svg></div>
<div class="clip" style="left:585px;width:27px"><span class="sp"><svg viewBox="0 0 13 13"><path d="M1.4 4.4h2.2l3.2-3v10.2l-3.2-3H1.4z" fill="#e4e4e4" stroke="#b8b8b8" stroke-width="1.3" stroke-linejoin="round"/><path d="M9.2 3a5 5 0 0 1 0 7" fill="none" stroke="#b8b8b8" stroke-width="1.4"/></svg></span><svg class="T" style="left:2px" viewBox="0 0 20 20"><text x="10" y="14.6" text-anchor="middle" font-family="Liberation Serif,serif" font-weight="bold" font-size="20" fill="#fff" stroke="#000" stroke-width="0.95">T</text></svg></div>
<div class="clip" style="left:620px;width:103px"><span class="sp"><svg viewBox="0 0 13 13"><path d="M1.4 4.4h2.2l3.2-3v10.2l-3.2-3H1.4z" fill="#e4e4e4" stroke="#b8b8b8" stroke-width="1.3" stroke-linejoin="round"/><path d="M9.2 3a5 5 0 0 1 0 7" fill="none" stroke="#b8b8b8" stroke-width="1.4"/></svg></span><svg class="T" style="left:15px" viewBox="0 0 20 20"><text x="10" y="14.6" text-anchor="middle" font-family="Liberation Serif,serif" font-weight="bold" font-size="20" fill="#fff" stroke="#000" stroke-width="0.95">T</text></svg><span class="tx" style="left:53px">更...</span></div>
<div class="clip" style="left:731px;width:22px"><span class="sp"><svg viewBox="0 0 13 13"><path d="M1.4 4.4h2.2l3.2-3v10.2l-3.2-3H1.4z" fill="#e4e4e4" stroke="#b8b8b8" stroke-width="1.3" stroke-linejoin="round"/><path d="M9.2 3a5 5 0 0 1 0 7" fill="none" stroke="#b8b8b8" stroke-width="1.4"/></svg></span><svg class="T" style="left:0px" viewBox="0 0 20 20"><text x="10" y="14.6" text-anchor="middle" font-family="Liberation Serif,serif" font-weight="bold" font-size="20" fill="#fff" stroke="#000" stroke-width="0.95">T</text></svg></div>
<div class="clip sel" style="left:761px;width:87px"><span class="sp"><svg viewBox="0 0 13 13"><path d="M1.4 4.4h2.2l3.2-3v10.2l-3.2-3H1.4z" fill="#e4e4e4" stroke="#b8b8b8" stroke-width="1.3" stroke-linejoin="round"/><path d="M9.2 3a5 5 0 0 1 0 7" fill="none" stroke="#b8b8b8" stroke-width="1.4"/></svg></span><svg class="T" style="left:15px" viewBox="0 0 20 20"><text x="10" y="14.6" text-anchor="middle" font-family="Liberation Serif,serif" font-weight="bold" font-size="20" fill="#fff" stroke="#000" stroke-width="0.95">T</text></svg><span class="tx" style="left:53px">每...</span></div>
<div class="clip" style="left:856px;width:48px"><span class="sp"><svg viewBox="0 0 13 13"><path d="M1.4 4.4h2.2l3.2-3v10.2l-3.2-3H1.4z" fill="#e4e4e4" stroke="#b8b8b8" stroke-width="1.3" stroke-linejoin="round"/><path d="M9.2 3a5 5 0 0 1 0 7" fill="none" stroke="#b8b8b8" stroke-width="1.4"/></svg></span><svg class="T" style="left:13px" viewBox="0 0 20 20"><text x="10" y="14.6" text-anchor="middle" font-family="Liberation Serif,serif" font-weight="bold" font-size="20" fill="#fff" stroke="#000" stroke-width="0.95">T</text></svg></div>
<div class="clip" style="left:913px;width:86px"><span class="sp"><svg viewBox="0 0 13 13"><path d="M1.4 4.4h2.2l3.2-3v10.2l-3.2-3H1.4z" fill="#e4e4e4" stroke="#b8b8b8" stroke-width="1.3" stroke-linejoin="round"/><path d="M9.2 3a5 5 0 0 1 0 7" fill="none" stroke="#b8b8b8" stroke-width="1.4"/></svg></span><svg class="T" style="left:15px" viewBox="0 0 20 20"><text x="10" y="14.6" text-anchor="middle" font-family="Liberation Serif,serif" font-weight="bold" font-size="20" fill="#fff" stroke="#000" stroke-width="0.95">T</text></svg><span class="tx" style="left:53px">极...</span></div>
<div class="clip" style="left:1007px;width:45px"><span class="sp"><svg viewBox="0 0 13 13"><path d="M1.4 4.4h2.2l3.2-3v10.2l-3.2-3H1.4z" fill="#e4e4e4" stroke="#b8b8b8" stroke-width="1.3" stroke-linejoin="round"/><path d="M9.2 3a5 5 0 0 1 0 7" fill="none" stroke="#b8b8b8" stroke-width="1.4"/></svg></span><svg class="T" style="left:12px" viewBox="0 0 20 20"><text x="10" y="14.6" text-anchor="middle" font-family="Liberation Serif,serif" font-weight="bold" font-size="20" fill="#fff" stroke="#000" stroke-width="0.95">T</text></svg></div>
<div class="clip" style="left:1060px;width:42px"><span class="sp"><svg viewBox="0 0 13 13"><path d="M1.4 4.4h2.2l3.2-3v10.2l-3.2-3H1.4z" fill="#e4e4e4" stroke="#b8b8b8" stroke-width="1.3" stroke-linejoin="round"/><path d="M9.2 3a5 5 0 0 1 0 7" fill="none" stroke="#b8b8b8" stroke-width="1.4"/></svg></span><svg class="T" style="left:10px" viewBox="0 0 20 20"><text x="10" y="14.6" text-anchor="middle" font-family="Liberation Serif,serif" font-weight="bold" font-size="20" fill="#fff" stroke="#000" stroke-width="0.95">T</text></svg></div>
<div class="clip" style="left:1111px;width:49px"><span class="sp"><svg viewBox="0 0 13 13"><path d="M1.4 4.4h2.2l3.2-3v10.2l-3.2-3H1.4z" fill="#e4e4e4" stroke="#b8b8b8" stroke-width="1.3" stroke-linejoin="round"/><path d="M9.2 3a5 5 0 0 1 0 7" fill="none" stroke="#b8b8b8" stroke-width="1.4"/></svg></span><svg class="T" style="left:14px" viewBox="0 0 20 20"><text x="10" y="14.6" text-anchor="middle" font-family="Liberation Serif,serif" font-weight="bold" font-size="20" fill="#fff" stroke="#000" stroke-width="0.95">T</text></svg></div>
<div class="clip" style="left:1169px;width:19px"><svg class="T" style="left:-2px" viewBox="0 0 20 20"><text x="10" y="14.6" text-anchor="middle" font-family="Liberation Serif,serif" font-weight="bold" font-size="20" fill="#fff" stroke="#000" stroke-width="0.95">T</text></svg></div>
<div class="clip" style="left:1196px;width:23px"><span class="sp"><svg viewBox="0 0 13 13"><path d="M1.4 4.4h2.2l3.2-3v10.2l-3.2-3H1.4z" fill="#e4e4e4" stroke="#b8b8b8" stroke-width="1.3" stroke-linejoin="round"/><path d="M9.2 3a5 5 0 0 1 0 7" fill="none" stroke="#b8b8b8" stroke-width="1.4"/></svg></span><svg class="T" style="left:0px" viewBox="0 0 20 20"><text x="10" y="14.6" text-anchor="middle" font-family="Liberation Serif,serif" font-weight="bold" font-size="20" fill="#fff" stroke="#000" stroke-width="0.95">T</text></svg></div>
<div class="clip" style="left:1227px;width:126px"><span class="sp"><svg viewBox="0 0 13 13"><path d="M1.4 4.4h2.2l3.2-3v10.2l-3.2-3H1.4z" fill="#e4e4e4" stroke="#b8b8b8" stroke-width="1.3" stroke-linejoin="round"/><path d="M9.2 3a5 5 0 0 1 0 7" fill="none" stroke="#b8b8b8" stroke-width="1.4"/></svg></span><svg class="T" style="left:15px" viewBox="0 0 20 20"><text x="10" y="14.6" text-anchor="middle" font-family="Liberation Serif,serif" font-weight="bold" font-size="20" fill="#fff" stroke="#000" stroke-width="0.95">T</text></svg><span class="tx" style="left:53px">是可...的</span></div>
<div class="abs" style="left:0;top:60px;width:1371px;height:3px;background:#ebe9e0"></div>
<div class="trl" style="top:92px"></div>
<div class="trl" style="top:122px"></div>
<div class="trl" style="top:152px"></div>
<div class="trl" style="top:179px"></div>
<div class="plus" style="top:68px"></div><div class="plusx" style="top:72px"></div>
<div class="plus" style="top:98px"></div><div class="plusx" style="top:102px"></div>
<div class="plus" style="top:128px"></div><div class="plusx" style="top:132px"></div>
<div class="plus" style="top:158px"></div><div class="plusx" style="top:162px"></div>
<div class="abs" style="left:1362px;top:76px;width:7px;height:99px;border-radius:3.5px;background:#c1c1c1"></div>
    </div>
    <div class="rowl" style="top:0;height:61px"></div>
    <svg class="ric" style="top:21px" viewBox="0 0 20 20"><rect x="2" y="1" width="16" height="16" rx="1.5" fill="none" stroke="#555" stroke-width="2"/><path d="M5.4 4.6h9.2v3h-1.4V6.6h-1.8v6.2h1.6v1.6H7v-1.6h1.6V6.6H6.8v1H5.4z" fill="#555"/></svg>
    <div class="rlabel" style="top:23px">旋转文字</div>
    <svg class="abs" style="left:133px;top:23px" width="14" height="14" viewBox="0 0 14 14"><circle cx="7" cy="7" r="5.6" fill="none" stroke="#666" stroke-width="1.1"/><text x="7" y="10" text-anchor="middle" font-size="8.5" font-family="Liberation Sans,sans-serif" fill="#555">?</text></svg>
    <div class="rowl" style="top:60px;height:62px"></div>
    <svg class="ric" style="top:97px" viewBox="0 0 20 20"><rect x="1.6" y="2.6" width="16.8" height="15.8" rx="1.5" fill="#777" stroke="#666" stroke-width="1.6"/><path d="M3 16l11-11M3 10.4l5.6-5.6M8.4 16.6l8.6-8.6M13.6 17l4-4" stroke="#fff" stroke-width="1.7"/><path d="M3.4 1h4.4v3" fill="none" stroke="#999" stroke-width="1"/></svg>
    <div class="rlabel" style="top:100px">装饰行</div>
    <div class="rlabel" style="top:100px">背景</div>
    <div class="rowl" style="top:122px;height:30px"></div>
    <svg class="ric" style="top:127px" viewBox="0 0 20 20"><rect x="1.6" y="5" width="13" height="13.4" rx="1.5" fill="#777" stroke="#666" stroke-width="1.4"/><path d="M3 16.4l10-10M3 11.4l5-5M8 17l6-6" stroke="#fff" stroke-width="1.6"/><path d="M3 2.4h13" stroke="#666" stroke-width="1.8" stroke-dasharray="1.3 1.2"/><path d="M17.2 3.6v13" stroke="#666" stroke-width="1.8" stroke-dasharray="1.3 1.2"/></svg>
    <div class="rlabel" style="top:130px">前景</div>
    <div class="rowl" style="top:152px;height:28px"></div>
    <svg class="ric" style="top:157px" viewBox="0 0 20 20"><rect x="1.6" y="1.6" width="16.8" height="16.8" rx="1.5" fill="none" stroke="#555" stroke-width="2"/><path d="M11 5v7.4" stroke="#555" stroke-width="1.8"/><circle cx="9" cy="12.8" r="2.2" fill="none" stroke="#555" stroke-width="1.6"/><path d="M11 5h2.6" stroke="#555" stroke-width="1.8"/></svg>
    <div class="rlabel" style="top:160px">声音1</div>
    <svg class="abs" style="left:144px;top:161px" width="12" height="12" viewBox="0 0 13 13"><path d="M1.2 4.6h2.4l3-2.6v9l-3-2.6H1.2z" fill="none" stroke="#666" stroke-width="1" stroke-linejoin="round"/><path d="M8.6 4.2a3.2 3.2 0 0 1 0 4.6" fill="none" stroke="#666" stroke-width="1"/></svg>
    <div class="abs" style="left:0;top:180px;width:1600px;height:1px;background:#dcdcdc"></div>

    <div class="rline" style="top:60px"></div><div class="rline" style="top:90px"></div><div class="rline" style="top:120px"></div><div class="rline" style="top:150px"></div>
    <div class="abs" style="left:1531px;top:0;width:69px;height:1px;background:#dcdcdc"></div>
    <div class="addb" style="top:65px"><span>背景</span></div>
    <div class="addb" style="top:95px"><span>前景</span></div>
    <div class="addb" style="top:125px"><span>音轨</span></div>
    <div class="abs" style="left:1590px;top:86px;width:12px;height:59px;background:#4a5260;border-radius:4px 0 0 4px"></div>
    <div class="abs" style="left:1594px;top:93px;width:4px;height:23px;background:repeating-linear-gradient(180deg,#6d7684 0 1.3px,#4a5260 1.3px 2.6px)"></div>
    <div class="abs" style="left:1594px;top:117px;width:4px;height:22px;background:linear-gradient(180deg,#b8d070,#8fd08a 60%,#5cc0c0)"></div>
    <div class="abs" style="left:1594px;top:117px;width:4px;height:22px;background:repeating-linear-gradient(180deg,transparent 0 1.3px,#4a5260 1.3px 2.6px)"></div>

  </div>
  <div class="abs" style="left:986px;top:123px;width:72px;height:27px;background:rgba(252,252,252,.8);border:1px solid rgba(225,225,225,.8);border-radius:2px;color:#b4b4b4;font-size:12px;line-height:27px;padding-left:5px;white-space:nowrap;letter-spacing:-.2px">每一个生命</div>
  <div class="abs" style="left:1040px;top:73px;width:1px;height:193px;background:#cc2f36"></div>
  <svg class="abs" style="left:1032px;top:52px" width="17" height="23" viewBox="0 0 17 23"><path d="M1.5.5h14a1 1 0 0 1 1 1v13.2L8.5 22.4.5 14.7V1.5a1 1 0 0 1 1-1z" fill="#2f8df0" stroke="#1b62b8" stroke-width="1"/><path d="M5.5 5v9M8.5 5v9M11.5 5v9" stroke="#183d6e" stroke-width="1"/></svg>

</div>
</body></html>
